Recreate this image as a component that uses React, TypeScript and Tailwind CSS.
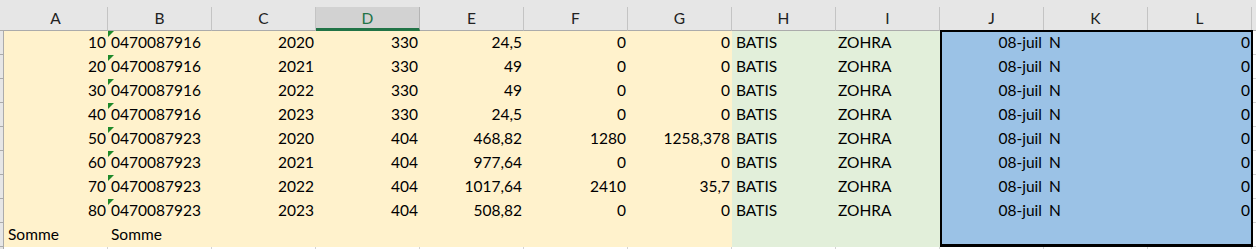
import React from 'react';

const COLS = ['A', 'B', 'C', 'D', 'E', 'F', 'G', 'H', 'I', 'J', 'K', 'L'];

// per column: fill colour and text alignment
const FILL = [
  'bg-[#fff2cc]', 'bg-[#fff2cc]', 'bg-[#fff2cc]', 'bg-[#fff2cc]', 'bg-[#fff2cc]', 'bg-[#fff2cc]', 'bg-[#fff2cc]',
  'bg-[#e2efda]', 'bg-[#e2efda]',
  'bg-[#9bc2e6]', 'bg-[#9bc2e6]', 'bg-[#9bc2e6]',
];
const ALIGN = [
  'justify-end pr-[2px]', 'justify-start pl-[3px]', 'justify-end pr-[2px]', 'justify-end pr-[2px]',
  'justify-end pr-[2px]', 'justify-end pr-[2px]', 'justify-end pr-[2px]', 'justify-start pl-[4px]',
  'justify-start pl-[2px]', 'justify-end pr-[2px]', 'justify-start pl-[5px]', 'justify-end pr-[2px]',
];

const ROWS: string[][] = [
  ['10', '0470087916', '2020', '330', '24,5', '0', '0', 'BATIS', 'ZOHRA', '08-juil', 'N', '0'],
  ['20', '0470087916', '2021', '330', '49', '0', '0', 'BATIS', 'ZOHRA', '08-juil', 'N', '0'],
  ['30', '0470087916', '2022', '330', '49', '0', '0', 'BATIS', 'ZOHRA', '08-juil', 'N', '0'],
  ['40', '0470087916', '2023', '330', '24,5', '0', '0', 'BATIS', 'ZOHRA', '08-juil', 'N', '0'],
  ['50', '0470087923', '2020', '404', '468,82', '1280', '1258,378', 'BATIS', 'ZOHRA', '08-juil', 'N', '0'],
  ['60', '0470087923', '2021', '404', '977,64', '0', '0', 'BATIS', 'ZOHRA', '08-juil', 'N', '0'],
  ['70', '0470087923', '2022', '404', '1017,64', '2410', '35,7', 'BATIS', 'ZOHRA', '08-juil', 'N', '0'],
  ['80', '0470087923', '2023', '404', '508,82', '0', '0', 'BATIS', 'ZOHRA', '08-juil', 'N', '0'],
];

const FONT = "font-['Lato','Liberation_Sans',sans-serif]";

export default function App() {
  return (
    <div className={`relative w-[1256px] h-[249px] overflow-hidden bg-white text-[15.5px] leading-[23px] text-black ${FONT}`}>
      {/* Column headers */}
      <div className="flex h-[31px] pt-[7px] bg-[#e6e6e6]">
        <div className="w-[4px] shrink-0 border-b border-[#ababab]" />
        {COLS.map((c) => (
          <div
            key={c}
            className={`w-[104px] shrink-0 h-[24px] flex justify-center border-r ${
              c === 'D'
                ? 'bg-[#d2d2d2] text-[#217346] border-b-[3px] border-b-[#217346] border-r-[#b4b4b4]'
                : 'text-[#222222] border-b border-b-[#ababab] border-r-[#c4c4c4]'
            }`}
          >
            {c}
          </div>
        ))}
        <div className="flex-1 h-[24px] border-b border-[#ababab]" />
      </div>

      {/* Data rows */}
      {ROWS.map((row, r) => (
        <div key={r} className="flex h-[24px]">
          <div className="w-[4px] shrink-0 bg-[#e6e6e6] border-r border-b border-[#ababab]" />
          {row.map((v, i) => (
            <div key={i} className={`relative w-[104px] shrink-0 flex ${FILL[i]} ${ALIGN[i]}`}>
              {i === 1 && (
                <span className="absolute left-0 top-0 w-0 h-0 border-t-[6px] border-r-[6px] border-t-[#1f8a2a] border-r-transparent" />
              )}
              <span className="whitespace-nowrap">{v}</span>
            </div>
          ))}
          <div className="flex-1 border-b border-[#d4d4d4]" />
        </div>
      ))}

      {/* Somme row */}
      <div className="flex h-[24px]">
        <div className="w-[4px] shrink-0 bg-[#e6e6e6] border-r border-b border-[#ababab]" />
        {COLS.map((c, i) => (
          <div key={c} className={`w-[104px] shrink-0 flex justify-start ${i === 0 ? 'pl-[4px]' : 'pl-[3px]'} ${FILL[i]}`}>
            {i < 2 ? 'Somme' : ''}
          </div>
        ))}
        <div className="flex-1 border-b border-[#d4d4d4]" />
      </div>

      {/* Next (empty) row */}
      <div className="flex h-[24px]">
        <div className="w-[4px] shrink-0 bg-[#e6e6e6] border-r border-[#ababab]" />
        {COLS.map((c) => (
          <div key={c} className="w-[104px] shrink-0 border-r border-[#d4d4d4]" />
        ))}
        <div className="flex-1" />
      </div>

      {/* Selection border over J1:L9 */}
      <div className="absolute left-[940px] top-[30px] w-[313px] h-[217px] border-2 border-b-[3px] border-black pointer-events-none" />
    </div>
  );
}
